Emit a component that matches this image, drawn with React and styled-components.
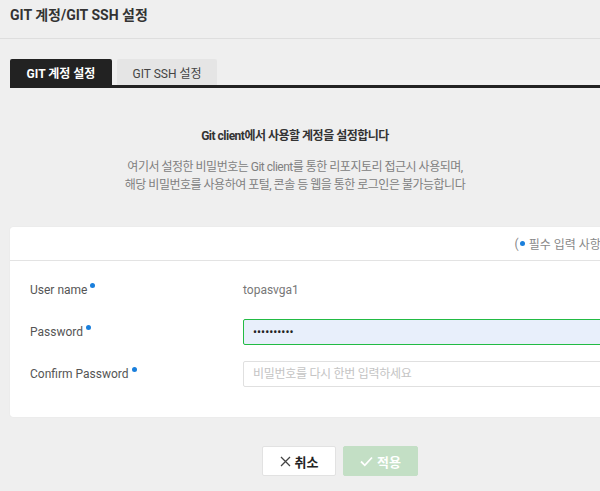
import styled, { createGlobalStyle } from "styled-components";

const Global = createGlobalStyle`
  html, body { margin: 0; padding: 0; background: #efefef; overflow: hidden; }
  body { font-family: Roboto, "Noto Sans CJK KR", sans-serif; color: #333; }
`;

const Page = styled.div`
  width: 680px;
  min-height: 491px;
  background: #efefef;
`;
const Header = styled.div`
  height: 39px;
  border-bottom: 1px solid #dedede;
  display: flex;
  align-items: center;
  padding: 0 10px;
  box-sizing: border-box;
`;
const Title = styled.h1`
  margin: 0 0 10px;
  font-size: 14px;
  font-weight: 700;
  color: #333;
`;
const Body = styled.div`
  padding: 20px 0 0 10px;
`;
const Tabs = styled.div`
  display: flex;
  gap: 5px;
  border-bottom: 3px solid #222;
`;
const Tab = styled.div`
  width: ${(p) => (p.$active ? "102px" : "100px")};
  height: 26px;
  display: flex;
  align-items: center;
  justify-content: center;
  font-size: 12px;
  font-weight: ${(p) => (p.$active ? 700 : 400)};
  background: ${(p) => (p.$active ? "#222" : "#e5e5e5")};
  color: ${(p) => (p.$active ? "#fff" : "#444")};
  border-radius: 2px 2px 0 0;
`;
const Intro = styled.div`
  width: 570px;
  text-align: center;
  padding-top: 38px;
`;
const Lead = styled.p`
  margin: 0 0 15px;
  font-size: 12px;
  font-weight: 700;
  color: #333;
  letter-spacing: -0.5px;
`;
const Desc = styled.p`
  margin: 0;
  font-size: 12px;
  line-height: 18px;
  color: #808080;
  letter-spacing: -0.5px;
`;
const Card = styled.div`
  margin-top: 33px;
  background: #fff;
  border-radius: 3px;
  box-shadow: 0 0 1px rgba(0, 0, 0, 0.12);
`;
const CardHead = styled.div`
  height: 33px;
  border-bottom: 1px solid #e3e3e3;
  display: flex;
  align-items: center;
  justify-content: flex-end;
  padding-right: 75px;
  font-size: 12px;
  color: #888;
`;
const Dot = styled.span`
  display: inline-block;
  width: 5px;
  height: 5px;
  border-radius: 50%;
  background: #1a7fdc;
  vertical-align: ${(p) => (p.$sup ? "6px" : "2px")};
  margin: 0 4px 0 ${(p) => (p.$sup ? "3px" : "1px")};
`;
const Form = styled.div`
  padding: 8px 0 22px 20px;
`;
const Row = styled.div`
  display: grid;
  grid-template-columns: 213px 400px;
  align-items: center;
  height: 42px;
`;
const Label = styled.div`
  font-size: 12px;
  color: #555;
`;
const Value = styled.div`
  font-size: 12px;
  color: #777;
`;
const Input = styled.input`
  box-sizing: border-box;
  height: 26px;
  width: 400px;
  padding: 0 9px;
  font-family: Roboto, "Noto Sans CJK KR", sans-serif;
  font-size: 12px;
  color: #222;
  outline: none;
  border-radius: 2px;
  border: 1px solid ${(p) => (p.$focus ? "#22bb44" : "#e0e0e0")};
  background: ${(p) => (p.$focus ? "#e8effb" : "#fff")};
  &::placeholder { color: #c4c4c4; letter-spacing: -0.3px; }
`;
const Actions = styled.div`
  display: flex;
  justify-content: center;
  gap: 7px;
  padding-top: 29px;
  width: 660px;
`;
const Button = styled.button`
  width: ${(p) => (p.$primary ? "75px" : "74px")};
  height: 30px;
  border-radius: 2px;
  font-family: Roboto, "Noto Sans CJK KR", sans-serif;
  font-size: 13px;
  font-weight: 700;
  display: flex;
  align-items: center;
  justify-content: center;
  gap: 4px;
  border: 1px solid ${(p) => (p.$primary ? "#c3dfc5" : "#e2e2e2")};
  background: ${(p) => (p.$primary ? "#c3dfc5" : "#fff")};
  color: ${(p) => (p.$primary ? "#fff" : "#222")};
  padding: 0;
`;

const XIcon = () => (
  <svg width="11" height="11" viewBox="0 0 11 11">
    <path d="M1 1L10 10M10 1L1 10" stroke="#444" strokeWidth="1.3" fill="none" />
  </svg>
);
const CheckIcon = () => (
  <svg width="13" height="11" viewBox="0 0 13 11">
    <path d="M1 5.5L4.8 9.3L12 1.5" stroke="#fff" strokeWidth="1.8" fill="none" />
  </svg>
);

export default function App() {
  return (
    <Page>
      <Global />
      <Header>
        <Title>GIT 계정/GIT SSH 설정</Title>
      </Header>
      <Body>
        <Tabs>
          <Tab $active>GIT 계정 설정</Tab>
          <Tab>GIT SSH 설정</Tab>
        </Tabs>
        <Intro>
          <Lead>Git client에서 사용할 계정을 설정합니다</Lead>
          <Desc>
            여기서 설정한 비밀번호는 Git client를 통한 리포지토리 접근시 사용되며,
            <br />
            해당 비밀번호를 사용하여 포털, 콘솔 등 웹을 통한 로그인은 불가능합니다
          </Desc>
        </Intro>
        <Card>
          <CardHead>
            (<Dot />필수 입력 사항)
          </CardHead>
          <Form>
            <Row>
              <Label>User name<Dot $sup /></Label>
              <Value>topasvga1</Value>
            </Row>
            <Row>
              <Label>Password<Dot $sup /></Label>
              <Input $focus type="password" defaultValue="1234567890" />
            </Row>
            <Row>
              <Label>Confirm Password<Dot $sup /></Label>
              <Input type="password" placeholder="비밀번호를 다시 한번 입력하세요" />
            </Row>
          </Form>
        </Card>
        <Actions>
          <Button><XIcon />취소</Button>
          <Button $primary><CheckIcon />적용</Button>
        </Actions>
      </Body>
    </Page>
  );
}
